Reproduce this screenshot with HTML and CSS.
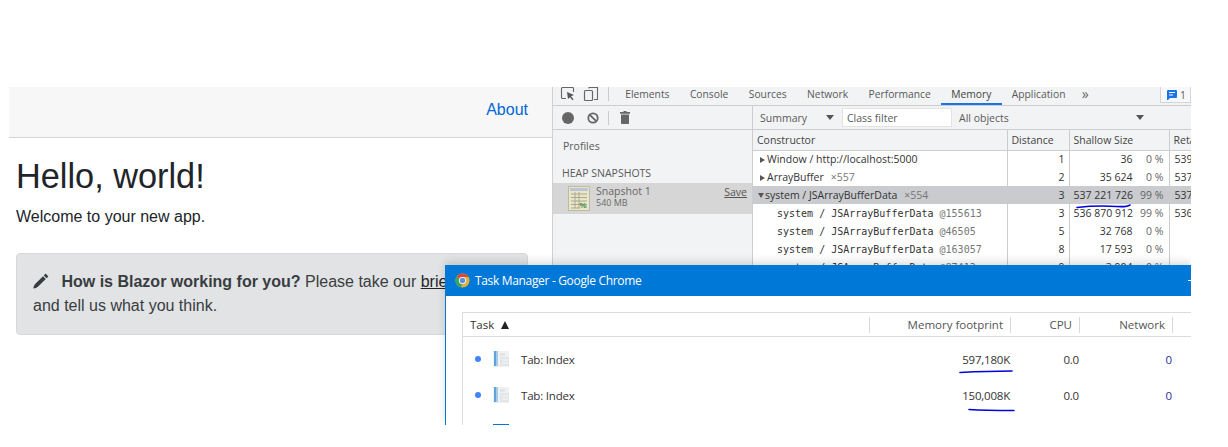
FILE: index.html
```html
<!DOCTYPE html>
<html lang="en">
<head>
<meta charset="utf-8">
<title>Blazor memory usage</title>
<link rel="stylesheet" href="styles.css">
</head>
<body>
<div class="shot">
  <section class="app">
    <header class="app-top"><a class="about" href="#">About</a></header>
    <main class="app-main">
      <h1>Hello, world!</h1>
      <p class="welcome">Welcome to your new app.</p>
      <div class="alert">
        <svg class="pencil" viewBox="0 0 16 16"><path d="M12.6 0.6 L15.4 3.4 L13.6 5.2 L10.8 2.4 Z M10 3.2 L12.8 6 L5.2 13.6 C4 14.8 2 15.6 0.4 15.6 C0.4 14 1.2 12 2.4 10.8 Z" fill="#383d41"/></svg>
        <strong>How is Blazor working for you?</strong> Please take our <a class="survey" href="#">brief survey</a> and tell us what you think.
      </div>
    </main>
  </section>

  <section class="devtools">
    <nav class="dt-tabs">
      <svg class="dt-ico" viewBox="0 0 16 16"><path d="M6 12.5H2.5a1 1 0 0 1-1-1V2.500a1 1 0 0 1 1-1h10a1 1 0 0 1 1 1V6" fill="none" stroke="#666" stroke-width="1.1"/><path d="M7 6l7 3-3 1.200 2.500 3-1 1-2.600-3L8 13z" fill="#555"/></svg>
      <svg class="dt-ico device" viewBox="0 0 16 16"><path d="M6 2.500V1.500h8.500v12H11" fill="none" stroke="#666" stroke-width="1.100"/><rect x="1.500" y="4.500" width="8" height="10" rx="1" fill="none" stroke="#666" stroke-width="1.200"/></svg>
      <span class="dt-sep"></span>
      <span class="tab tab-first">Elements</span>
      <span class="tab">Console</span>
      <span class="tab">Sources</span>
      <span class="tab">Network</span>
      <span class="tab">Performance</span>
      <span class="tab tab-on">Memory</span>
      <span class="tab">Application</span>
      <span class="tab-more">»</span>
      <span class="badge">
        <svg class="badge-ico" viewBox="0 0 10 10"><path d="M1 0h8a1 1 0 0 1 1 1v6a1 1 0 0 1-1 1H3L1 10H0V1a1 1 0 0 1 1-1z" fill="#1a73e8"/><path d="M2 2.500h6M2 5h4" stroke="#fff" stroke-width="1"/></svg>1
      </span>
    </nav>
    <div class="dt-tools">
      <div class="tools-left">
        <span class="rec"></span>
        <svg class="clear" viewBox="0 0 12 12"><circle cx="6" cy="6" r="4.700" fill="none" stroke="#666" stroke-width="1.800"/><path d="M2.800 2.800l6.400 6.400" stroke="#666" stroke-width="1.800"/></svg>
        <span class="dt-sep"></span>
        <svg class="trash" viewBox="0 0 10 13"><path d="M3.500 0h3v1H10v1.800H0V1h3.500zM1 3.500h8V12a1 1 0 0 1-1 1H2a1 1 0 0 1-1-1z" fill="#666"/></svg>
      </div>
      <div class="tools-right">
        <span class="sel sel-summary">Summary</span><span class="caret"></span>
        <span class="filter">Class filter</span>
        <span class="sel sel-all">All objects</span><span class="caret"></span>
      </div>
    </div>
    <div class="dt-body">
      <aside class="side">
        <div class="side-title">Profiles</div>
        <div class="side-head">HEAP SNAPSHOTS</div>
        <div class="snap">
          <svg class="snap-ico" viewBox="0 0 22 25"><rect x="0.500" y="0.500" width="21" height="24" fill="#e9e6c6" stroke="#bdbba6"/><rect x="2" y="2" width="18" height="3" fill="#b9c4d6"/><path d="M3 8h16M3 11.500h16M3 15h16M3 18.500h16M3 22h9M7 6v16M11 6v16" stroke="#a9aa96" stroke-width="1"/><text x="11.500" y="22" class="snap-pct">%</text></svg>
          <div class="snap-text">
            <div class="snap-name">Snapshot 1</div>
            <div class="snap-size">540 MB</div>
          </div>
          <a class="snap-save" href="#">Save</a>
        </div>
      </aside>
      <table class="heap">
        <colgroup><col class="c-ctor"><col class="c-dist"><col class="c-shal"><col class="c-ret"></colgroup>
        <thead>
          <tr><th>Constructor</th><th>Distance</th><th>Shallow Size</th><th>Reta</th></tr>
        </thead>
        <tbody>
          <tr><td><span class="tri"></span>Window / http://localhost:5000</td><td class="num">1</td><td><div class="sz"><span>36</span><span class="pct">0 %</span></div></td><td>539</td></tr>
          <tr><td><span class="tri"></span>ArrayBuffer<span class="count">×557</span></td><td class="num">2</td><td><div class="sz"><span>35 624</span><span class="pct">0 %</span></div></td><td>537</td></tr>
          <tr class="row-on"><td><span class="tri tri-open"></span>system / JSArrayBufferData<span class="count">×554</span></td><td class="num">3</td><td><div class="sz"><span>537 221 726</span><span class="pct">99 %</span></div></td><td>537</td></tr>
          <tr><td class="mono">system / JSArrayBufferData <span class="at">@155613</span></td><td class="num">3</td><td><div class="sz"><span>536 870 912</span><span class="pct">99 %</span></div></td><td>536</td></tr>
          <tr><td class="mono">system / JSArrayBufferData <span class="at">@46505</span></td><td class="num">5</td><td><div class="sz"><span>32 768</span><span class="pct">0 %</span></div></td><td></td></tr>
          <tr><td class="mono">system / JSArrayBufferData <span class="at">@163057</span></td><td class="num">8</td><td><div class="sz"><span>17 593</span><span class="pct">0 %</span></div></td><td></td></tr>
          <tr><td class="mono">system / JSArrayBufferData <span class="at">@87413</span></td><td class="num">9</td><td><div class="sz"><span>3 904</span><span class="pct">0 %</span></div></td><td></td></tr>
        </tbody>
      </table>
    </div>
  </section>

  <section class="task">
    <div class="task-bar">
      <svg class="chrome" viewBox="0 0 16 16">
        <circle cx="8" cy="8" r="7.500" fill="#e2b13c"/>
        <path d="M8 .5A7.500 7.500 0 0 1 14.500 4.250H8A3.750 3.750 0 0 0 4.700 6.200L1.900 3.600A7.500 7.500 0 0 1 8 .5z" fill="#d9483b"/>
        <path d="M1.900 3.600L4.700 6.200A3.750 3.750 0 0 0 8 11.750L6 15.200A7.500 7.500 0 0 1 1.900 3.600z" fill="#3ca55c"/>
        <circle cx="8" cy="8" r="3.800" fill="#fff"/><circle cx="8" cy="8" r="2.900" fill="#5a8fe8"/>
      </svg>
      <span class="task-title">Task Manager - Google Chrome</span>
      <span class="task-min"></span>
    </div>
    <div class="task-table">
      <div class="task-head">
        <div class="th th-task">Task<span class="sort"></span></div>
        <div class="th">Memory footprint</div>
        <div class="th">CPU</div>
        <div class="th">Network</div>
      </div>
      <div class="task-row">
        <div class="td-task"><span class="dot"></span><svg class="page" viewBox="0 0 16 16"><rect width="16" height="16" fill="#f0f1f2"/><rect x="1" width="2" height="15" fill="#5fa3dc"/><rect x="3" width="2" height="15" fill="#a5cbea"/><rect x="7" y="2" width="5" height="3" fill="#e4e5e7"/><rect x="7" y="6" width="9" height="9" fill="#e3e6e9"/><path d="M9 9h6M9 12h6" stroke="#f6f7f8"/></svg><span>Tab: Index</span></div>
        <div class="td">597,180K</div><div class="td">0.0</div><div class="td td-net">0</div>
      </div>
      <div class="task-row">
        <div class="td-task"><span class="dot"></span><svg class="page" viewBox="0 0 16 16"><rect width="16" height="16" fill="#f0f1f2"/><rect x="1" width="2" height="15" fill="#5fa3dc"/><rect x="3" width="2" height="15" fill="#a5cbea"/><rect x="7" y="2" width="5" height="3" fill="#e4e5e7"/><rect x="7" y="6" width="9" height="9" fill="#e3e6e9"/><path d="M9 9h6M9 12h6" stroke="#f6f7f8"/></svg><span>Tab: Index</span></div>
        <div class="td">150,008K</div><div class="td">0.0</div><div class="td td-net">0</div>
      </div>
      <div class="task-row">
        <div class="td-task"><span class="dot dot-none"></span><span class="page page-ext"></span></div>
      </div>
    </div>
  </section>

  <svg class="marks" viewBox="0 0 1182 338">
    <path d="M1068 120.500C1085 118.500 1100 119 1108 119.500C1115 120 1118 120 1121 118"/>
    <path d="M951 285.500C970 284.500 985 284 1003 284"/>
    <path d="M960 322.500C975 323.500 990 323.500 1005 323.500"/>
  </svg>
</div>
</body>
</html>
```

FILE: styles.css
```css
* { box-sizing: border-box; }
html, body { margin: 0; padding: 0; background: #fff; overflow: hidden; }
body { height: 447px; }

.shot {
  position: relative;
  display: flex;
  width: 1182px;
  height: 338px;
  margin: 87px 0 0 9px;
  overflow: hidden;
  font-family: "Liberation Sans", Arial, sans-serif;
}

/* Left: the web app */
.app { width: 543px; flex: none; }
.app-top {
  display: flex;
  align-items: center;
  justify-content: flex-end;
  height: 51px;
  padding: 0 24px 4px 0;
  background: #f7f7f7;
  border-bottom: 1px solid #d6d5d5;
}
.about { color: #0366d6; font-size: 16px; text-decoration: none; }
.app-main { padding: 0 24px 0 7px; color: #212529; }
h1 { margin: 17px 0 0; font-size: 34.300px; line-height: 42px; font-weight: 400; }
.welcome { margin: 8px 0 0; font-size: 16px; line-height: 24px; }
.alert {
  margin-top: 24px;
  height: 82px;
  padding: 16px 16px;
  background: #e2e3e5;
  border: 1px solid #d6d8db;
  border-radius: 4px;
  color: #383d41;
  font-size: 16px;
  line-height: 24px;
}
.pencil { width: 16px; height: 16px; margin-right: 8px; vertical-align: -2px; }
.survey { color: #212529; text-decoration: underline; }

/* Right: DevTools */
.devtools {
  width: 639px;
  flex: none;
  height: 338px;
  background: #fff;
  border-left: 1px solid #d0d0d0;
  font-family: "Open Sans", sans-serif;
  font-size: 10.500px;
  color: #5a5a5a;
}
.dt-tabs, .dt-tools { display: flex; align-items: center; background: #f1f3f4; border-bottom: 1px solid #cdcdcd; }
.dt-tabs { height: 19px; padding-left: 7px; font-size: 10.300px; }
.dt-ico { width: 16px; height: 16px; flex: none; margin-bottom: 4px; }
.device { margin-left: 7px; }
.dt-sep { width: 1px; height: 14px; background: #ccc; flex: none; margin-left: 9px; }
.dt-tabs .dt-sep { margin-bottom: 4px; }
.tab { display: flex; align-items: center; height: 18px; padding: 0 10.200px 4px; flex: none; }
.tab-first { margin-left: 6px; }
.tab-on { box-shadow: inset 0 -2px 0 #1a73e8; color: #444; }
.tab-more { margin: 0 0 4px 6px; font-size: 14px; line-height: 14px; color: #666; }
.badge {
  display: flex;
  align-items: center;
  align-self: flex-start;
  gap: 3px;
  width: 31px;
  height: 16px;
  margin-left: auto;
  padding-left: 6px;
  background: #f7f8f9;
  border: 1px solid #d5d5d5;
  border-top: 0;
}
.badge-ico { width: 10px; height: 10px; }
.dt-tools { height: 24px; }
.tools-left { display: flex; align-items: center; width: 200px; height: 100%; padding-left: 9px; border-right: 1px solid #cdcdcd; flex: none; }
.rec { width: 12px; height: 12px; border-radius: 50%; background: #666; }
.clear { width: 12px; height: 12px; margin-left: 13px; }
.tools-left .dt-sep { margin-left: 9px; }
.trash { width: 10px; height: 13px; margin-left: 11px; }
.tools-right { display: flex; align-items: center; height: 100%; padding-left: 7px; flex: 1; }
.caret { width: 0; height: 0; border: 4px solid transparent; border-top: 5px solid #555; border-bottom: 0; flex: none; }
.sel-summary { width: 66px; }
.filter { width: 110px; height: 19px; margin-left: 8px; padding: 2px 4px; background: #fff; border: 1px solid #e3e3e3; }
.sel-all { width: 177px; margin-left: 7px; }

.dt-body { display: flex; height: 295px; }
.side { width: 200px; flex: none; background: #f1f3f4; border-right: 1px solid #cdcdcd; }
.side-title { height: 34px; padding: 9px 0 0 10px; }
.side-head { height: 19px; padding: 0 0 0 9px; line-height: 19px; }
.snap { display: flex; height: 31px; padding: 3px 5px 0 15px; background: #d6d6d6; }
.snap-ico { width: 22px; height: 25px; flex: none; }
.snap-pct { font: 700 8px "Liberation Sans", sans-serif; fill: #3f8a4c; }
.snap-text { margin-left: 6px; line-height: 11px; }
.snap-name { color: #666; }
.snap-size { font-size: 9px; color: #6a6a6a; }
.snap-save { margin-left: auto; color: #555; line-height: 12px; }

.heap { width: 438px; table-layout: fixed; border-collapse: collapse; height: 0; color: #333; }
.c-ctor { width: 254px; }
.c-dist { width: 62px; }
.c-shal { width: 100px; }
.c-ret { width: 22px; }
.heap th, .heap td {
  height: 18px;
  padding: 0 4px;
  overflow: hidden;
  white-space: nowrap;
  font-weight: 400;
  text-align: left;
  border-left: 1px solid #ccc;
}
.heap th { height: 20px; background: #f1f3f4; border-bottom: 1px solid #cdcdcd; color: #444; }
.heap th:first-child, .heap td:first-child { border-left: 0; }
.heap td:last-child { padding: 0 0 0 5px; }
.heap .num { text-align: right; }
.row-on td { background: #c9cbcf; }
.heap .mono { padding-left: 24px; font: 10px "DejaVu Sans Mono", monospace; color: #333; }
.at { color: #777; }
.tri { display: inline-block; width: 0; height: 0; margin: 0 2px 0 3px; border: 3.500px solid transparent; border-left: 5px solid #555; border-right: 0; }
.tri-open { margin: 0 1px 0 1px; border: 3.500px solid transparent; border-top: 5px solid #555; border-bottom: 0; vertical-align: 1px; }
.count { margin-left: 7px; color: #777; }
.sz { display: flex; justify-content: flex-end; padding-right: 1px; }
.pct { width: 31px; text-align: right; color: #666; }

/* Task Manager window, floating over the rest */
.task {
  position: absolute;
  left: 436px;
  top: 178px;
  width: 746px;
  height: 160px;
  background: #fff;
  border-left: 1px solid #0078d7;
  font-family: "Open Sans", sans-serif;
  font-size: 11.500px;
  color: #333;
  box-shadow: 0 -3px 8px rgba(0, 0, 0, .14);
}
.task-bar { display: flex; align-items: center; height: 31px; padding-left: 9px; background: #0078d7; color: #fff; }
.chrome { width: 15px; height: 15px; flex: none; }
.task-title { margin-left: 5px; font-size: 12px; letter-spacing: -.33px; }
.task-min { width: 3px; height: 1px; margin-left: auto; background: #fff; }
.task-table { display: block; margin: 16px 0 0 16px; border: 1px solid #dcdcdc; border-width: 1px 0 0 1px; }
.task-head {
  display: grid;
  grid-template-columns: 407px 141px 69px 93px;
  height: 24px;
  border-bottom: 1px solid #dcdcdc;
  align-items: center;
}
.th { height: 16px; padding-right: 7px; line-height: 16px; text-align: right; border-right: 1px solid #d8d8d8; color: #555; }
.th-task { display: flex; align-items: center; padding-left: 7px; text-align: left; color: #333; }
.sort { width: 0; height: 0; margin-left: 7px; border: 4.500px solid transparent; border-bottom: 8px solid #222; border-top: 0; }
.task-row { display: grid; grid-template-columns: 407px 141px 69px 93px; height: 36px; align-items: center; }
.task-head + .task-row { margin-top: 4px; }
.td-task { display: flex; align-items: center; padding-left: 12px; letter-spacing: -.2px; }
.dot { width: 6px; height: 6px; border-radius: 50%; background: #4285f4; flex: none; }
.dot-none { background: none; }
.page { display: block; width: 16px; height: 16px; margin: 0 12px 0 12px; flex: none; }
.page-ext { margin-top: 2px; border-top: 1px solid #0078d7; }
.td { padding-right: 1px; text-align: right; letter-spacing: -.2px; }
.td-net { color: #2a2a9a; }

/* Hand-drawn annotation strokes */
.marks { position: absolute; left: 0; top: 0; width: 1182px; height: 338px; pointer-events: none; }
.marks path { fill: none; stroke: #0000dc; stroke-width: 1.600; stroke-linecap: round; }
```
